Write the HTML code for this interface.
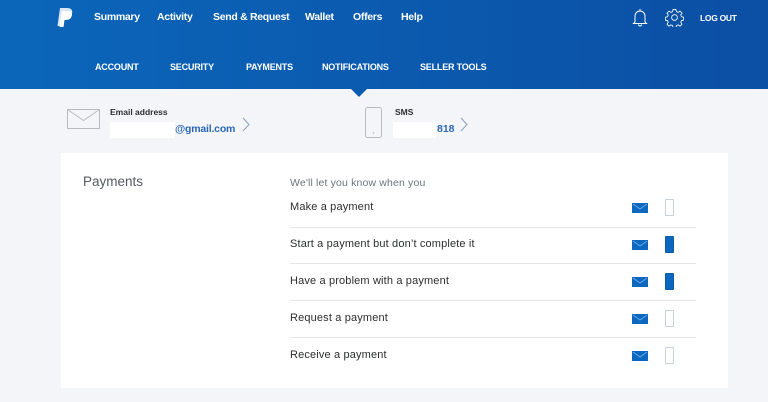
<!DOCTYPE html>
<html><head><meta charset="utf-8"><style>
*{margin:0;padding:0;box-sizing:border-box}
body{width:768px;height:402px;overflow:hidden;background:#f4f5f8;font-family:"Liberation Sans",sans-serif;position:relative}
.hdr{position:absolute;left:0;top:0;width:768px;height:89px;background:linear-gradient(90deg,#0b66ba,#0b4fa4)}
.t{position:absolute;color:#fff;font-size:10.5px;font-weight:bold;white-space:nowrap;letter-spacing:-0.3px}
.s{position:absolute;color:#fff;font-size:9px;font-weight:bold;top:62px;letter-spacing:-0.2px}
.a{position:absolute;white-space:nowrap}
.card{position:absolute;left:61px;top:153px;width:667px;height:235px;background:#fff}
.row{position:absolute;left:290px;width:406px;font-size:11px;color:#2c2e2f;letter-spacing:0.15px}
.sep{position:absolute;left:290px;width:406px;height:1px;background:#e6e6e6}
.env{position:absolute;left:632px}
.ph{position:absolute;left:665px;width:9px;height:17px;border:1px solid #c8d0dc;border-radius:1px;background:#fff}
.ph.on{background:#0b68be;border-color:#0b5aa8}
</style></head><body>
<div class="hdr">
<svg style="position:absolute;left:57px;top:8px" width="16" height="20" viewBox="0 0 16 20"><path d="M3 0h7c4 0 6 2 5 5.5-1 4-4 5-7 5H6.5L5.3 18H0.5z" fill="#fff" opacity="0.85"/><path d="M5 3h6c3 0 4.5 2 3.8 4.8C14 11 11.5 12 9 12H7.5L6.5 19H2.5z" fill="#fff"/></svg>
<div class="t" style="left:94px;top:11px">Summary</div>
<div class="t" style="left:157px;top:11px">Activity</div>
<div class="t" style="left:213px;top:11px">Send &amp; Request</div>
<div class="t" style="left:305px;top:11px">Wallet</div>
<div class="t" style="left:353px;top:11px">Offers</div>
<div class="t" style="left:401px;top:11px">Help</div>
<svg style="position:absolute;left:632px;top:8px" width="16" height="19" viewBox="0 0 16 19"><path d="M8 1v1.5M3 14V8a5 5 0 0 1 10 0v6l1.5 1.5h-13zM6.5 16.5a1.5 1.5 0 0 0 3 0" stroke="#fff" fill="none" stroke-width="1"/></svg>
<svg style="position:absolute;left:665px;top:8px" width="19" height="19" viewBox="0 0 20 20"><path d="M8.5 1.5h3l.5 2.3 1.8.8 2-1.3 2.1 2.1-1.3 2 .8 1.8 2.3.5v3l-2.3.5-.8 1.8 1.3 2-2.1 2.1-2-1.3-1.8.8-.5 2.3h-3l-.5-2.3-1.8-.8-2 1.3-2.1-2.1 1.3-2-.8-1.8-2.3-.5v-3l2.3-.5.8-1.8-1.3-2 2.1-2.1 2 1.3 1.8-.8z" stroke="#fff" fill="none" stroke-width="0.9"/><circle cx="10" cy="10" r="3" stroke="#fff" fill="none" stroke-width="0.9"/></svg>
<div class="t" style="left:700px;top:13px;font-size:8.5px">LOG OUT</div>
<div class="s" style="left:95px">ACCOUNT</div>
<div class="s" style="left:170px">SECURITY</div>
<div class="s" style="left:246px">PAYMENTS</div>
<div class="s" style="left:322px">NOTIFICATIONS</div>
<div class="s" style="left:420px">SELLER TOOLS</div>
</div>
<div style="position:absolute;left:351px;top:89px;width:0;height:0;border-left:8px solid transparent;border-right:8px solid transparent;border-top:8px solid #0b5cb0"></div>
<svg style="position:absolute;left:67px;top:109px" width="33" height="20" viewBox="0 0 33 20"><rect x="0.5" y="0.5" width="32" height="19" fill="none" stroke="#b8bcc2"/><path d="M0.5 0.5l16 11 16-11" fill="none" stroke="#b8bcc2"/></svg>
<div class="a" style="left:110px;top:107px;font-size:8.5px;font-weight:bold;color:#2c2e2f">Email address</div>
<div style="position:absolute;left:110px;top:122px;width:65px;height:16px;background:#fff"></div>
<div class="a" style="left:175px;top:123px;font-size:10.5px;font-weight:bold;color:#2a67b3;letter-spacing:-0.2px">@gmail.com</div>
<svg style="position:absolute;left:242px;top:117px" width="8" height="15"><path d="M1 1l6 6.5-6 6.5" fill="none" stroke="#8a9fba"/></svg>
<svg style="position:absolute;left:365px;top:107px" width="17" height="31"><rect x="0.5" y="0.5" width="16" height="30" rx="2" fill="none" stroke="#b8bcc2"/><circle cx="8.5" cy="26" r="0.8" fill="#b8bcc2"/></svg>
<div class="a" style="left:395px;top:107px;font-size:8.5px;font-weight:bold;color:#2c2e2f">SMS</div>
<div style="position:absolute;left:393px;top:122px;width:43px;height:16px;background:#fff"></div>
<div class="a" style="left:437px;top:123px;font-size:10.5px;font-weight:bold;color:#2a67b3">818</div>
<svg style="position:absolute;left:460px;top:117px" width="8" height="15"><path d="M1 1l6 6.5-6 6.5" fill="none" stroke="#8a9fba"/></svg>
<div class="card"></div>
<div class="a" style="left:83px;top:174px;font-size:13.5px;color:#555a60">Payments</div>
<div class="a" style="left:290px;top:177px;font-size:10.5px;color:#6c7378;letter-spacing:0.15px">We'll let you know when you</div>
<div class="row" style="top:201px">Make a payment</div>
<div class="sep" style="top:227px"></div>
<div class="row" style="top:238px">Start a payment but don’t complete it</div>
<div class="sep" style="top:263px"></div>
<div class="row" style="top:275px">Have a problem with a payment</div>
<div class="sep" style="top:300px"></div>
<div class="row" style="top:312px">Request a payment</div>
<div class="sep" style="top:337px"></div>
<div class="row" style="top:349px">Receive a payment</div>
<svg class="env" style="top:203px" width="16" height="10"><rect width="16" height="10" fill="#0b68be"/><path d="M1 1l7 5 7-5" fill="none" stroke="#6aa6e6" stroke-width="1"/></svg><div class="ph" style="top:199px"></div>
<svg class="env" style="top:240px" width="16" height="10"><rect width="16" height="10" fill="#0b68be"/><path d="M1 1l7 5 7-5" fill="none" stroke="#6aa6e6" stroke-width="1"/></svg><div class="ph on" style="top:236px"></div>
<svg class="env" style="top:277px" width="16" height="10"><rect width="16" height="10" fill="#0b68be"/><path d="M1 1l7 5 7-5" fill="none" stroke="#6aa6e6" stroke-width="1"/></svg><div class="ph on" style="top:273px"></div>
<svg class="env" style="top:314px" width="16" height="10"><rect width="16" height="10" fill="#0b68be"/><path d="M1 1l7 5 7-5" fill="none" stroke="#6aa6e6" stroke-width="1"/></svg><div class="ph" style="top:310px"></div>
<svg class="env" style="top:351px" width="16" height="10"><rect width="16" height="10" fill="#0b68be"/><path d="M1 1l7 5 7-5" fill="none" stroke="#6aa6e6" stroke-width="1"/></svg><div class="ph" style="top:347px"></div>
</body></html>
